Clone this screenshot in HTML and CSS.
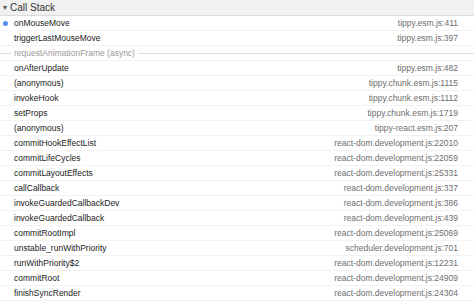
FILE: index.html
```html
<!DOCTYPE html>
<html lang="en">
<head>
    <meta charset="UTF-8">
    <title>Call Stack</title>
    <link rel="stylesheet" href="styles.css">
</head>
<body>
    <div class="pane">
        <div class="pane-header">
            <span class="arrow">&#9662;</span>
            <span>Call Stack</span>
        </div>
        <div class="frame selected"><span class="dot"></span><span class="fn">onMouseMove</span><span class="loc">tippy.esm.js:411</span></div>
        <div class="frame"><span class="fn">triggerLastMouseMove</span><span class="loc">tippy.esm.js:397</span></div>
        <div class="async-row"><span class="async-line short"></span><span class="async-label">requestAnimationFrame (async)</span><span class="async-line"></span></div>
        <div class="frame"><span class="fn">onAfterUpdate</span><span class="loc">tippy.esm.js:482</span></div>
        <div class="frame"><span class="fn">(anonymous)</span><span class="loc">tippy.chunk.esm.js:1115</span></div>
        <div class="frame"><span class="fn">invokeHook</span><span class="loc">tippy.chunk.esm.js:1112</span></div>
        <div class="frame"><span class="fn">setProps</span><span class="loc">tippy.chunk.esm.js:1719</span></div>
        <div class="frame"><span class="fn">(anonymous)</span><span class="loc">tippy-react.esm.js:207</span></div>
        <div class="frame"><span class="fn">commitHookEffectList</span><span class="loc">react-dom.development.js:22010</span></div>
        <div class="frame"><span class="fn">commitLifeCycles</span><span class="loc">react-dom.development.js:22059</span></div>
        <div class="frame"><span class="fn">commitLayoutEffects</span><span class="loc">react-dom.development.js:25331</span></div>
        <div class="frame"><span class="fn">callCallback</span><span class="loc">react-dom.development.js:337</span></div>
        <div class="frame"><span class="fn">invokeGuardedCallbackDev</span><span class="loc">react-dom.development.js:386</span></div>
        <div class="frame"><span class="fn">invokeGuardedCallback</span><span class="loc">react-dom.development.js:439</span></div>
        <div class="frame"><span class="fn">commitRootImpl</span><span class="loc">react-dom.development.js:25069</span></div>
        <div class="frame"><span class="fn">unstable_runWithPriority</span><span class="loc">scheduler.development.js:701</span></div>
        <div class="frame"><span class="fn">runWithPriority$2</span><span class="loc">react-dom.development.js:12231</span></div>
        <div class="frame"><span class="fn">commitRoot</span><span class="loc">react-dom.development.js:24909</span></div>
        <div class="frame"><span class="fn">finishSyncRender</span><span class="loc">react-dom.development.js:24304</span></div>
    </div>
</body>
</html>
```

FILE: styles.css
```css
body {
    margin: 0;
    padding: 0;
    background-color: #fff;
    font-family: "Liberation Sans", Arial, sans-serif;
    font-size: 8.5px;
    color: #303030;
    overflow: hidden;
}

.pane {
    display: flex;
    flex-direction: column;
}

.pane-header {
    height: 15px;
    display: flex;
    align-items: center;
    gap: 3px;
    padding-left: 3px;
    background-color: #f1f1f1;
    border-bottom: 1px solid #dcdcdc;
    color: #333;
    font-size: 10px;
}

.arrow {
    font-size: 8px;
    color: #555;
}

.frame {
    height: 14px;
    display: flex;
    align-items: center;
    padding: 0 16px 0 14px;
    border-bottom: 1px solid #f2f2f2;
    position: relative;
}

.fn {
    flex: 1;
    color: #222;
}

.loc {
    color: #6e6e6e;
}

.dot {
    position: absolute;
    left: 3px;
    top: 5px;
    width: 5px;
    height: 5px;
    border-radius: 50%;
    background-color: #5a8cf0;
}

.async-row {
    height: 14px;
    display: flex;
    align-items: center;
    gap: 3px;
    border-bottom: 1px solid #f2f2f2;
}

.async-label {
    color: #9a9a9a;
}

.async-line {
    flex: 1;
    height: 1px;
    background-color: #dcdcdc;
}

.async-line.short {
    flex: none;
    width: 11px;
}
```
